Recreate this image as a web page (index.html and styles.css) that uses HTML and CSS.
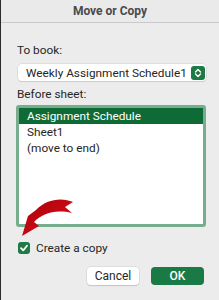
FILE: index.html
```html
<!DOCTYPE html>
<html>
<head>
<meta charset="utf-8">
<link rel="stylesheet" href="styles.css">
</head>
<body>
<div class="win">
  <div class="titlebar">Move or Copy</div>
  <div class="content">
    <div class="label lbl-book">To book:</div>
    <div class="select">
      <span class="select-text">Weekly Assignment Schedule1</span>
      <span class="stepper">
        <svg width="8" height="10" viewBox="0 0 8 10"><path d="M1.5 4 L4 1.5 L6.5 4 M1.5 6 L4 8.5 L6.5 6" fill="none" stroke="#fff" stroke-width="1.4" stroke-linecap="round" stroke-linejoin="round"/></svg>
      </span>
    </div>
    <div class="label lbl-sheet">Before sheet:</div>
    <div class="listbox">
      <div class="row selected">Assignment Schedule</div>
      <div class="row">Sheet1</div>
      <div class="row">(move to end)</div>
    </div>
    <div class="check-row">
      <span class="checkbox">
        <svg width="10" height="10" viewBox="0 0 10 10"><path d="M2 5.2 L4.2 7.4 L8 2.8" fill="none" stroke="#fff" stroke-width="1.8" stroke-linecap="round" stroke-linejoin="round"/></svg>
      </span>
      <span class="check-label">Create a copy</span>
    </div>
    <div class="buttons">
      <button class="btn cancel">Cancel</button>
      <button class="btn ok">OK</button>
    </div>
  </div>
  <svg class="arrow" width="80" height="45" viewBox="0 0 80 45">
    <defs>
      <linearGradient id="ag" x1="0" y1="0" x2="1" y2="1">
        <stop offset="0" stop-color="#a8000a"/>
        <stop offset="1" stop-color="#e0101a"/>
      </linearGradient>
    </defs>
    <path d="M73 7 C62 2 46 4 36 15 L28 21 L22 41 L39 31 L34 27 C42 19 54 14 72 18 L65 12 Z" fill="url(#ag)"/>
  </svg>
</div>
</body>
</html>
```

FILE: styles.css
```css
html, body {
  margin: 0;
  padding: 0;
  background: #ececec;
}
.win {
  position: relative;
  width: 219px;
  height: 300px;
  box-sizing: border-box;
  border-left: 1px solid #2b2b2b;
  background: #ececec;
  font-family: Roboto, "Liberation Sans", sans-serif;
  font-size: 11.8px;
  color: #262626;
  overflow: hidden;
}
.titlebar {
  height: 23px;
  box-sizing: border-box;
  border-bottom: 1px solid #c9c9c9;
  text-align: center;
  font-weight: 700;
  font-size: 12px;
  line-height: 22px;
  color: #4a4a4a;
  background: #eaeaea;
}
.content {
  padding: 0 13px 0 16px;
  display: flex;
  flex-direction: column;
}
.label {
  line-height: 16px;
}
.lbl-book {
  margin-top: 19px;
}
.select {
  margin-top: 6px;
  height: 17px;
  background: #fff;
  border-radius: 4px;
  box-shadow: 0 0 0 0.5px #cfcfcf, 0 1px 1px rgba(0,0,0,0.15);
  display: flex;
  align-items: center;
  justify-content: space-between;
  padding: 0 1px 0 8px;
  margin-left: 1px;
}
.select-text {
  white-space: nowrap;
}
.stepper {
  width: 14px;
  height: 14px;
  background: #1d7a45;
  border-radius: 3px;
  display: flex;
  align-items: center;
  justify-content: center;
}
.lbl-sheet {
  margin-top: 5px;
}
.listbox {
  margin-top: 3px;
  margin-left: -1px;
  height: 122px;
  box-sizing: border-box;
  border: 3px solid #76ad8c;
  border-radius: 3px;
  background: #fff;
}
.row {
  height: 16px;
  line-height: 16px;
  padding-left: 8px;
}
.row.selected {
  background: #0f6b36;
  color: #fff;
}
.check-row {
  margin-top: 15px;
  margin-left: 1px;
  display: flex;
  align-items: center;
  gap: 6px;
  height: 12px;
}
.checkbox {
  width: 12px;
  height: 12px;
  border-radius: 3px;
  background: #1d7a45;
  display: flex;
  align-items: center;
  justify-content: center;
}
.check-label {
  line-height: 12px;
}
.arrow {
  position: absolute;
  left: -1px;
  top: 195px;
}
.buttons {
  margin-top: 13px;
  display: flex;
  justify-content: flex-end;
  gap: 12px;
  padding-right: 2px;
}
.btn {
  width: 52px;
  height: 18px;
  border: none;
  border-radius: 4px;
  font-family: Roboto, "Liberation Sans", sans-serif;
  font-size: 12px;
  padding: 0;
}
.cancel {
  background: #fff;
  color: #262626;
  box-shadow: 0 0 0 0.5px #cfcfcf, 0 1px 1px rgba(0,0,0,0.2);
}
.ok {
  width: 53px;
  background: #1a7a45;
  color: #fff;
  font-weight: 500;
}
```
